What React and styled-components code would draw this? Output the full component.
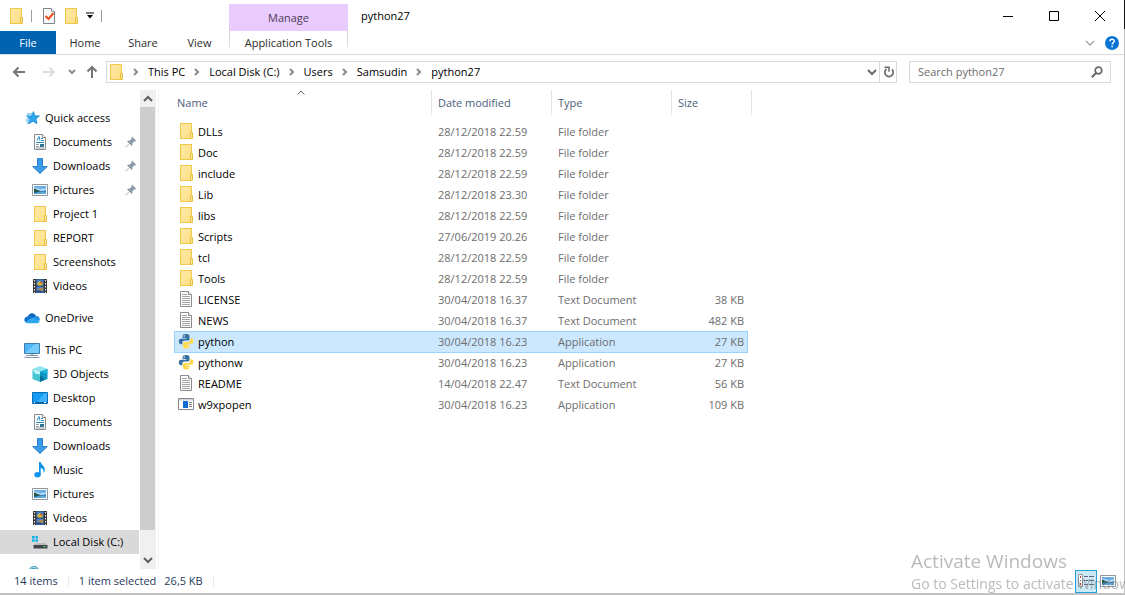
import React from "react";
import styled, { createGlobalStyle, css } from "styled-components";

const Global = createGlobalStyle`
  * { box-sizing: border-box; }
  body {
    margin: 0;
    background: #fff;
    color: #000;
    font: 11px/16px "Open Sans", "Noto Sans", sans-serif;
  }
  button, input { font: inherit; color: inherit; }
  svg { display: block; flex: none; }
`;

/* ---------- icons ---------- */

const Svg = ({ w = 16, h = 16, children, ...rest }) => (
  <svg width={w} height={h} viewBox={`0 0 ${w} ${h}`} aria-hidden="true" {...rest}>
    {children}
  </svg>
);

const Folder = () => (
  <Svg>
    <defs>
      <linearGradient id="folderFill" x1="0" y1="0" x2="1" y2="1">
        <stop offset="0" stopColor="#ffe9a6" />
        <stop offset="1" stopColor="#fddf85" />
      </linearGradient>
    </defs>
    <rect x="2.5" y="0.5" width="11" height="15" fill="url(#folderFill)" stroke="#efc94c" />
    <path d="M12.5 9.5h2v6h-2z" fill="#ffe596" stroke="#e9bf3f" />
  </Svg>
);

const TextFile = () => (
  <Svg>
    <path d="M2.5 0.5h8l3 3v12h-11z" fill="#fdfdfd" stroke="#8b8b8b" />
    <path d="M10.5 0.5v3h3" fill="#fff" stroke="#8b8b8b" />
    <path d="M4 3.5h5M4 5.5h8M4 7.5h8M4 9.5h8M4 11.5h8M4 13.5h8" stroke="#a3a3a3" />
  </Svg>
);

const CheckFile = () => (
  <Svg>
    <path d="M2.5 0.5h8l3 3v12h-11z" fill="#f8f9fa" stroke="#7d858b" />
    <path d="M10.5 0.5v3h3" fill="#fff" stroke="#9aa1a6" />
    <path d="M4.5 8l3 3 5-6" fill="none" stroke="#e8501c" strokeWidth="2" />
  </Svg>
);

const DocFile = () => (
  <Svg>
    <path d="M2.5 0.5h8l3 3v12h-11z" fill="#fff" stroke="#8b8b8b" />
    <path d="M10.5 0.5v3h3" fill="#fff" stroke="#8b8b8b" />
    <path d="M5 6.5l2-4 1 4" fill="none" stroke="#2b8fc4" />
    <path d="M9 4.5h2M9 6.5h3M4 8.5h8" stroke="#2b8fc4" />
    <path d="M4 10.5h3M4 12.5h3M4 14h8" stroke="#8b9aa4" />
    <path d="M8 10h4v3H8z" fill="#2d7896" />
  </Svg>
);

const Python = () => (
  <Svg>
    <path d="M8 1C5.400 1 4.600 1.800 4.600 3.200V5H8.300v.7H3C1.500 5.700.8 7 .8 8.300.8 10 1.700 11.200 3 11.200h1.300V9.500c0-1.200 1-2 2.200-2h3.300c1 0 1.700-.8 1.700-1.800V3.200C11.500 1.700 10.300 1 8 1z" fill="#35709f" />
    <circle cx="6.200" cy="2.900" r=".75" fill="#fff" />
    <path d="M8.300 15.500c2.600 0 3.400-.8 3.400-2.200v-1.800H8v-.7h5.200c1.500 0 2.200-1.300 2.200-2.600 0-1.700-.9-2.900-2.200-2.900h-.9V7c0 1.200-1 2-2.200 2H6.800c-1 0-1.800.8-1.800 1.800v2.500c0 1.500 1.100 2.200 3.300 2.200z" fill="#ffd846" />
    <circle cx="10.100" cy="13.600" r=".75" fill="#fff" />
  </Svg>
);

const AppFile = () => (
  <Svg>
    <path d="M0.500 2.500h15v11h-15z" fill="#fff" stroke="#83898e" />
    <path d="M1 3h14v1.500H1z" fill="#cfd4d8" />
    <path d="M5 5h5v7H5z" fill="#0f6fd0" />
    <path d="M11 6.500h3M11 8.500h3M11 10.500h3" stroke="#777" />
  </Svg>
);

const Star = () => (
  <Svg>
    <path d="M9.500 1.500l1.400 4.200 4.600.2-3.500 2.900 1 4.900-4-2.500-4.300 2.600 1.300-4.700L3 6h4.500z" fill="#2ba5ee" stroke="#1683cc" strokeWidth=".7" />
    <path d="M3 4h5M2 6h3M2.500 9h3M2 11h3M3 13h2" stroke="#35a9eb" />
  </Svg>
);

const Down = () => (
  <Svg>
    <path d="M5.500 0.500h5v8h4.700L8 15.600 0.800 8.500h4.700z" fill="#3d9ae8" stroke="#2b80cc" />
  </Svg>
);

const Picture = () => (
  <Svg>
    <path d="M0.500 2.500h15v11h-15z" fill="#fff" stroke="#8d969d" />
    <path d="M2 4h12v8H2z" fill="#b7dcf7" />
    <path d="M2 4h12v2.500L8 7 2 5.500z" fill="#6aaee8" />
    <path d="M2 7l4 1.500 4 .5 4-.5V12H2z" fill="#2c72ab" />
    <path d="M2 6.500c2 .5 4 2 6 2.500l-3 1-3-.5z" fill="#24553c" />
    <path d="M4 11l5-1.500 5 .5v2H2z" fill="#61a8d2" />
  </Svg>
);

const Film = () => (
  <Svg>
    <path d="M1 1h14v14H1z" fill="#3c3c3c" />
    <path d="M4.500 1.500h7v6h-7z" fill="#3f7fd8" />
    <path d="M4.500 8.500h7v6h-7z" fill="#3f7fd8" />
    <path d="M5 5l3-2 3 2-1 2.500H6z" fill="#d8b52e" />
    <path d="M8 4l2-1v3z" fill="#c4462d" />
    <path d="M5 10l3 1 3-2v3l-3 1.500z" fill="#c98f2d" />
    <path d="M5 13l3-1 3 2.500H5z" fill="#22539d" />
    <path d="M2.500 2v13M13.500 2v13" stroke="#e6e6e6" strokeDasharray="1.500 1.500" />
  </Svg>
);

const Cloud = () => (
  <Svg>
    <path d="M4 6.500C5.200 2.600 10.300 2 12 6.200L9 10z" fill="#0a64b8" />
    <path d="M4 6.200c2-.4 3.300.3 4.500 1.100L2 12.500C-.8 11 0 6.800 4 6.200z" fill="#0f76d0" />
    <path d="M8.500 7.500l3.200-1.400c3-.3 4.500 2.200 4 4.300L12 11z" fill="#1b8fe0" />
    <path d="M1.500 12.200L8.700 7.500l6.900 3.700c-.5 1.400-1.500 2-2.900 2H4.200c-1.200 0-2.100-.3-2.700-1z" fill="#2ba8ef" />
  </Svg>
);

const Monitor = () => (
  <Svg>
    <path d="M0.500 1.500h15v10h-15z" fill="#4cb5f5" stroke="#3f7fae" />
    <path d="M1 11L11 2h4v9z" fill="#77cbfb" />
    <path d="M6 12h4v1.500H6z" fill="#b7c5cf" />
    <path d="M2 13.500h12M0.500 15.500h15" stroke="#8598a8" />
  </Svg>
);

const Cube = () => (
  <Svg>
    <path d="M0.500 3L8 0l7.500 3L8 5.500z" fill="#8fe3ea" />
    <path d="M0.500 3L8 5.500V16L0.500 13z" fill="#45c6d2" />
    <path d="M0.500 3L8 5.500v3L3 7.500z" fill="#c2f3f5" />
    <path d="M15.500 3L8 5.500V16l7.500-3z" fill="#0e96c4" />
    <path d="M8 9l5 4-5 3z" fill="#087399" />
    <path d="M8 5.500L15.500 3v5z" fill="#25b5dc" />
  </Svg>
);

const Desktop = () => (
  <Svg>
    <path d="M0.500 2.500h15v11h-15z" fill="#149cf5" stroke="#0b6cb8" />
    <path d="M5 12L13 3h2v9z" fill="#3fb2fb" />
    <path d="M1 12.500h14" stroke="#0b5c9c" />
    <path d="M2 12.500h1M12 12.500h2" stroke="#fff" />
  </Svg>
);

const Note = () => (
  <Svg>
    <ellipse cx="5.500" cy="12.800" rx="3.200" ry="2.700" fill="#1295ec" />
    <path d="M7 0h1.700c.3 3.200 4.800 3.800 4 9-.2.900-.6 1.500-1.200 2 .5-2.800-.7-4.600-2.800-5V13H7z" fill="#0f93ea" />
  </Svg>
);

const Drive = () => (
  <Svg>
    <path d="M0 2h2.700v2.500H0zM3.500 2H6v2.500H3.500zM0 5.300h2.700v2.500H0zM3.500 5.300H6v2.500H3.500z" fill="#16b2ee" />
    <path d="M4 9h9l2.500 2H1.500z" fill="#b9bcc0" />
    <path d="M1.500 11h14v3.500h-14z" fill="#42464a" />
    <path d="M11.500 12.500h2" stroke="#3bea55" />
  </Svg>
);

const Network = () => (
  <Svg>
    <circle cx="10" cy="5" r="5" fill="#4b9dbf" />
    <path d="M7 2.500c2-1.500 4-1.500 6 0" stroke="#a9dcef" fill="none" />
    <path d="M1 7h9v6H1z" fill="#3fa3dd" stroke="#8598a8" />
  </Svg>
);

const Pin = () => (
  <Svg w={12} h={12}>
    <path d="M7 0.500L11.500 5l-1.200.5-.8-.2-2 2c.2 1.200 0 2-.7 2.700L4.500 7.700 1 11.500l-.5-.5L4.200 7.400 2 5.200c.8-.7 1.600-.9 2.700-.7l2-2-.2-.9z" fill="#8e9ba6" />
  </Svg>
);

const Stroke = ({ w, h, d, color = "#5f5f5f", width = 1 }) => (
  <Svg w={w} h={h}>
    <path d={d} fill="none" stroke={color} strokeWidth={width} />
  </Svg>
);

const ArrowLeft = () => <Stroke w={14} h={12} width={2} color="#757575" d="M13 6H2M6.500 1.500L2 6l4.500 4.500" />;
const ArrowRight = () => <Stroke w={14} h={12} width={2} color="#dcdcdc" d="M1 6h11M7.500 1.500L12 6l-4.500 4.500" />;
const ArrowUp = () => <Stroke w={12} h={14} width={2} color="#757575" d="M6 13V2M1.500 6.500L6 2l4.500 4.500" />;
const Crumb = () => <Stroke w={6} h={8} width={2} color="#8a8a8a" d="M1 1l3 3-3 3" />;

const DetailsView = () => (
  <Svg>
    <path d="M0.500 1.500h4v12h-4z" fill="#fff" stroke="#8d969d" />
    <path d="M2 4h1M2 11h1" stroke="#c0392b" strokeWidth="2" />
    <path d="M2 7.500h1" stroke="#555" />
    <path d="M6 3.500h4M11 3.500h5M6 7.500h4M11 7.500h5M6 11.500h4M11 11.500h5" stroke="#667" />
  </Svg>
);

/* ---------- window ---------- */

const Window = styled.div`
  height: 100vh;
  display: flex;
  flex-direction: column;
  padding: 0 1px 2px 0;
  background: linear-gradient(#111 29px, #c2c2c2 29px);
  overflow: hidden;
`;

const bar = css`
  display: flex;
  flex: none;
  background: #fff;
`;

const IconButton = styled.button`
  display: flex;
  align-items: center;
  justify-content: center;
  flex: none;
  padding: 0;
  border: 0;
  background: none;
  width: ${(p) => p.$w || 16}px;
`;

const TitleBar = styled.header`
  ${bar}
  height: 31px;
  padding-right: 1px;
`;

const QuickTools = styled.div`
  display: flex;
  align-items: center;
  gap: 6px;
  width: 229px;
  padding-left: 8px;
`;

const Rule = styled.span`
  width: 1px;
  height: 12px;
  margin: 0 3px 0 1px;
  background: #9b9b9b;
`;

const ToolGroup = styled.div`
  width: 119px;
  margin-top: 4px;
  padding-top: 6px;
  text-align: center;
  color: #4a3b55;
  background: #eacbfd;
`;

const WindowTitle = styled.h1`
  flex: 1;
  margin: 0;
  padding: 8px 13px;
  font-size: 11px;
  line-height: 16px;
  font-weight: 400;
`;

const Ribbon = styled.nav`
  ${bar}
  height: 24px;
  border-bottom: 1px solid #dadbdc;
  padding-right: 4px;
`;

const Tab = styled.button`
  width: ${(p) => p.$w}px;
  padding: 0;
  border: 0;
  color: ${(p) => (p.$file ? "#fff" : "#2b2b2b")};
  background: ${(p) => (p.$file ? "#0063b1" : "none")};
`;

const ToolTab = styled(Tab)`
  margin-left: auto;
  border: solid;
  border-width: 0 1px;
  border-image: linear-gradient(#d0d0d0, #dedede 60%, #fff 80%) 1;
`;

const TabList = styled.div`
  display: flex;
  width: 348px;
`;

const Spacer = styled.div`
  flex: 1;
`;

const AddressRow = styled.div`
  ${bar}
  align-items: center;
  height: 35px;
  padding: 0 13px 1px 6px;
`;

const Field = styled.div`
  display: flex;
  align-items: stretch;
  height: 22px;
  border: 1px solid #d9d9d9;
`;

const AddressField = styled(Field)`
  flex: 1;
  margin-right: 12px;
`;

const Crumbs = styled.ol`
  display: flex;
  align-items: center;
  flex: 1;
  margin: 0;
  padding: 0 0 0 1px;
  list-style: none;
`;

const CrumbItem = styled.li`
  display: flex;
  align-items: center;
  a {
    color: #000;
    text-decoration: none;
  }
`;

const CrumbMark = styled.span`
  display: flex;
  justify-content: center;
  width: 24px;
`;

const Refresh = styled(IconButton)`
  padding-left: 1px;
  border-left: 1px solid #d9d9d9;
`;

const SearchField = styled(Field)`
  width: 202px;
  padding-right: 3px;
  input {
    flex: 1;
    min-width: 0;
    padding: 0 8px;
    border: 0;
    outline: 0;
    background: none;
  }
  input::placeholder {
    color: #6d6d6d;
    opacity: 1;
  }
`;

/* ---------- body ---------- */

const Body = styled.div`
  display: flex;
  flex: 1;
  min-height: 0;
  background: #fff;
`;

const Sidebar = styled.nav`
  width: 140px;
  padding: 16px 1px 0 0;
  overflow: hidden;
`;

const Group = styled.ul`
  margin: 0 0 8px;
  padding: 0;
  list-style: none;
`;

const Place = styled.a`
  display: flex;
  align-items: center;
  gap: 5px;
  height: 24px;
  padding: 0 2px 0 ${(p) => (p.$child ? 32 : 24)}px;
  color: #000;
  text-decoration: none;
  white-space: nowrap;
  background: ${(p) => (p.$active ? "#d9d9d9" : "none")};
  span {
    flex: 1;
  }
`;

const Scrollbar = styled.div`
  display: flex;
  flex-direction: column;
  width: 16px;
  background: #f0f0f0;
`;

const ScrollButton = styled(IconButton)`
  height: 17px;
`;

const Track = styled.div`
  flex: 1;
`;

const Thumb = styled.div`
  width: 15px;
  height: 95%;
  background: #cdcdcd;
`;

const Files = styled.main`
  flex: 1;
  margin-left: 2px;
  padding-left: 15px;
  border-left: 1px solid #f3f3f3;
`;

const Table = styled.table`
  display: block;
  text-align: left;
  line-height: 18px;
  thead, tbody {
    display: block;
  }
`;

const HeadRow = styled.tr`
  display: grid;
  grid-template-columns: 258px 120px 120px 80px;
  margin-bottom: 6px;
`;

const Head = styled.th`
  position: relative;
  height: 25px;
  padding: 4px 0 0 ${(p) => (p.$first ? 3 : 6)}px;
  border-right: 1px solid #e5e5e5;
  font-weight: 400;
  color: #4c607a;
`;

const SortMark = styled.span`
  position: absolute;
  left: 48%;
  top: 0;
`;

const Row = styled.tr`
  display: grid;
  grid-template-columns: 258px 120px 120px 72px;
  align-items: start;
  width: 574px;
  height: 21px;
  padding-top: 2px;
  ${(p) =>
    p.$selected &&
    css`
      height: 22px;
      margin-bottom: -1px;
      background: #cce8ff;
      box-shadow: inset 0 0 0 1px #99d1ff;
    `}
`;

const Cell = styled.td`
  padding: 0 0 0 ${(p) => (p.$right ? 0 : 6)}px;
  text-align: ${(p) => (p.$right ? "right" : "left")};
  color: #6d6d6d;
`;

const NameCell = styled.td`
  display: flex;
  align-items: flex-start;
  gap: 4px;
  padding: 0 4px;
`;

/* ---------- footer ---------- */

const StatusBar = styled.footer`
  ${bar}
  align-items: center;
  height: 24px;
  padding: 0 5px 0 14px;
  color: #1e395b;
`;

const StatusItem = styled.span`
  margin-right: ${(p) => p.$gap}px;
`;

const StatusRule = styled.span`
  width: 1px;
  height: 12px;
  margin-right: 10px;
  background: #ececec;
`;

const ViewButton = styled.button`
  display: flex;
  align-items: center;
  justify-content: center;
  width: 22px;
  height: 23px;
  padding: 0;
  border: 1px solid ${(p) => (p.$on ? "#26a0da" : "transparent")};
  background: ${(p) => (p.$on ? "#cbe8f6" : "none")};
`;

const Watermark = styled.div`
  position: fixed;
  right: 0;
  bottom: 1px;
  width: 214px;
  overflow: hidden;
  white-space: nowrap;
  color: rgba(130, 130, 130, 0.55);
  font-size: 14px;
  line-height: 20px;
  pointer-events: none;
  strong {
    display: block;
    font-size: 19px;
    line-height: 26px;
    font-weight: 400;
  }
`;

const groups = [
  [
    ["Quick access", Star],
    ["Documents", DocFile, "pin"],
    ["Downloads", Down, "pin"],
    ["Pictures", Picture, "pin"],
    ["Project 1", Folder],
    ["REPORT", Folder],
    ["Screenshots", Folder],
    ["Videos", Film],
  ],
  [["OneDrive", Cloud]],
  [
    ["This PC", Monitor],
    ["3D Objects", Cube],
    ["Desktop", Desktop],
    ["Documents", DocFile],
    ["Downloads", Down],
    ["Music", Note],
    ["Pictures", Picture],
    ["Videos", Film],
    ["Local Disk (C:)", Drive, "active"],
  ],
  [["Network", Network, "icon"]],
];

const files = [
  ["DLLs", "28/12/2018 22.59", "File folder", "", Folder],
  ["Doc", "28/12/2018 22.59", "File folder", "", Folder],
  ["include", "28/12/2018 22.59", "File folder", "", Folder],
  ["Lib", "28/12/2018 23.30", "File folder", "", Folder],
  ["libs", "28/12/2018 22.59", "File folder", "", Folder],
  ["Scripts", "27/06/2019 20.26", "File folder", "", Folder],
  ["tcl", "28/12/2018 22.59", "File folder", "", Folder],
  ["Tools", "28/12/2018 22.59", "File folder", "", Folder],
  ["LICENSE", "30/04/2018 16.37", "Text Document", "38 KB", TextFile],
  ["NEWS", "30/04/2018 16.37", "Text Document", "482 KB", TextFile],
  ["python", "30/04/2018 16.23", "Application", "27 KB", Python],
  ["pythonw", "30/04/2018 16.23", "Application", "27 KB", Python],
  ["README", "14/04/2018 22.47", "Text Document", "56 KB", TextFile],
  ["w9xpopen", "30/04/2018 16.23", "Application", "109 KB", AppFile],
];

const path = ["This PC", "Local Disk (C:)", "Users", "Samsudin", "python27"];

export default function App() {
  return (
    <Window>
      <Global />
      <TitleBar>
        <QuickTools>
          <Folder />
          <Rule />
          <IconButton aria-label="Properties"><CheckFile /></IconButton>
          <IconButton aria-label="New folder"><Folder /></IconButton>
          <IconButton $w={9} aria-label="Customize toolbar">
            <Svg w={8} h={7}>
              <path d="M0 1h8" stroke="#000" />
              <path d="M1 3h6L4 6.500z" fill="#000" />
            </Svg>
          </IconButton>
          <Rule />
        </QuickTools>
        <ToolGroup>Manage</ToolGroup>
        <WindowTitle>python27</WindowTitle>
        <IconButton $w={46} aria-label="Minimize">
          <Stroke w={10} h={10} color="#000" d="M0 5.500h10" />
        </IconButton>
        <IconButton $w={46} aria-label="Maximize">
          <Stroke w={10} h={10} color="#000" d="M0.500 0.500h9v9h-9z" />
        </IconButton>
        <IconButton $w={46} aria-label="Close">
          <Stroke w={10} h={10} color="#000" d="M0 0l10 10M10 0L0 10" />
        </IconButton>
      </TitleBar>

      <Ribbon>
        <TabList>
          <Tab $w={56} $file>File</Tab>
          <Tab $w={58}>Home</Tab>
          <Tab $w={58}>Share</Tab>
          <Tab $w={55}>View</Tab>
          <ToolTab $w={119}>Application Tools</ToolTab>
        </TabList>
        <Spacer />
        <IconButton $w={28} aria-label="Expand ribbon">
          <Stroke w={10} h={6} width={1.5} color="#a8a8a8" d="M1 1l4 4 4-4" />
        </IconButton>
        <IconButton $w={16} aria-label="Help">
          <Svg w={14} h={14}>
            <circle cx="7" cy="7" r="7" fill="#0a74d4" />
            <path d="M5 5.300c0-2.600 4.200-2.600 4.200-.2C9.200 6.700 7.200 6.600 7.200 8.600" fill="none" stroke="#fff" strokeWidth="1.500" />
            <path d="M6.400 9.800h1.500v1.500H6.400z" fill="#fff" />
          </Svg>
        </IconButton>
      </Ribbon>

      <AddressRow>
        <IconButton $w={26} aria-label="Back"><ArrowLeft /></IconButton>
        <IconButton $w={34} aria-label="Forward"><ArrowRight /></IconButton>
        <IconButton $w={12} aria-label="Recent locations">
          <Stroke w={8} h={6} width={2} color="#8a8a8a" d="M1 1l3 3 3-3" />
        </IconButton>
        <IconButton $w={28} aria-label="Up"><ArrowUp /></IconButton>
        <AddressField>
          <Crumbs>
            <CrumbItem><Folder /></CrumbItem>
            {path.map((name) => (
              <CrumbItem key={name}>
                <CrumbMark><Crumb /></CrumbMark>
                <a href="#path">{name}</a>
              </CrumbItem>
            ))}
          </Crumbs>
          <IconButton $w={14} aria-label="Previous locations">
            <Stroke w={10} h={7} width={2} color="#6a6a6a" d="M1 1l4 4 4-4" />
          </IconButton>
          <Refresh $w={17} aria-label="Refresh">
            <Svg w={12} h={12}>
              <path d="M3.500 3A4.200 4.200 0 1 0 9 3.400" fill="none" stroke="#6a6a6a" strokeWidth="1.700" />
              <path d="M1.500 1.200H6v4.500" fill="none" stroke="#6a6a6a" strokeWidth="1.500" />
            </Svg>
          </Refresh>
        </AddressField>
        <SearchField>
          <input type="search" aria-label="Search" placeholder="Search python27" />
          <IconButton $w={20} aria-label="Start search">
            <Svg w={12} h={12}>
              <circle cx="7.500" cy="4.500" r="3.300" fill="none" stroke="#6a6a6a" strokeWidth="1.700" />
              <path d="M5 7L0.800 11.200" stroke="#6a6a6a" strokeWidth="2" />
            </Svg>
          </IconButton>
        </SearchField>
      </AddressRow>

      <Body>
        <Sidebar aria-label="Places">
          {groups.map((items) => (
            <Group key={items[0][0]}>
              {items.map(([name, Icon, flag], i) => (
                <li key={name}>
                  <Place href="#place" aria-label={name} $child={i > 0} $active={flag === "active"}>
                    <Icon />
                    {flag !== "icon" && <span>{name}</span>}
                    {flag === "pin" && <Pin />}
                  </Place>
                </li>
              ))}
            </Group>
          ))}
        </Sidebar>
        <Scrollbar>
          <ScrollButton aria-label="Scroll up">
            <Stroke w={10} h={7} width={2} d="M1 6l4-4 4 4" />
          </ScrollButton>
          <Track><Thumb /></Track>
          <ScrollButton aria-label="Scroll down">
            <Stroke w={10} h={7} width={2} d="M1 1l4 4 4-4" />
          </ScrollButton>
        </Scrollbar>
        <Files>
          <Table>
            <thead>
              <HeadRow>
                <Head $first>
                  Name
                  <SortMark><Stroke w={8} h={5} color="#6a6a6a" d="M0.500 4.500L4 1l3.500 3.500" /></SortMark>
                </Head>
                <Head>Date modified</Head>
                <Head>Type</Head>
                <Head>Size</Head>
              </HeadRow>
            </thead>
            <tbody>
              {files.map(([name, date, type, size, Icon]) => (
                <Row key={name} $selected={name === "python"}>
                  <NameCell><Icon />{name}</NameCell>
                  <Cell>{date}</Cell>
                  <Cell>{type}</Cell>
                  <Cell $right>{size}</Cell>
                </Row>
              ))}
            </tbody>
          </Table>
        </Files>
      </Body>

      <StatusBar>
        <StatusItem $gap={10}>14 items</StatusItem>
        <StatusRule />
        <StatusItem $gap={8}>1 item selected</StatusItem>
        <StatusItem $gap={10}>26,5 KB</StatusItem>
        <StatusRule />
        <Spacer />
        <ViewButton $on aria-label="Details view"><DetailsView /></ViewButton>
        <ViewButton aria-label="Thumbnail view"><Picture /></ViewButton>
      </StatusBar>
      <Watermark>
        <strong>Activate Windows</strong>
        Go to Settings to activate Windows.
      </Watermark>
    </Window>
  );
}
